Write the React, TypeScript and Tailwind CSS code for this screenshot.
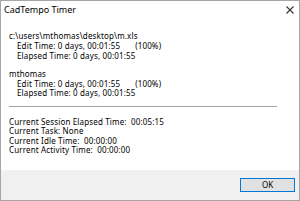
import React from "react";

export default function App() {
  const font = { fontFamily: '"Segoe UI", "Noto Sans", "Liberation Sans", Arial, sans-serif' };
  return (
    <div
      className="w-[300px] h-[201px] border border-[#a6a6a6] bg-white flex flex-col text-[#000] overflow-hidden"
      style={font}
    >
      <div className="h-[17px] flex items-center justify-between pl-[3px] pr-[4px] shrink-0">
        <span className="text-[9px] leading-[10px]">CadTempo Timer</span>
        <svg width="8" height="8" viewBox="0 0 8 8" className="mr-[1px]">
          <path d="M0.5 0.5 L7.5 7.5 M7.5 0.5 L0.5 7.5" stroke="#333" strokeWidth="1.1" />
        </svg>
      </div>
      <div className="flex-1 pl-[8px] pr-[22px] pt-[13px] text-[8px] tracking-[0.15px] whitespace-pre">
        <div className="leading-[10px]">
          <div>c:\users\mthomas\desktop\m.xls</div>
          <div className="pl-[8px]">
            Edit Time: 0 days, 00:01:55<span className="ml-[15px]">(100%)</span>
          </div>
          <div className="pl-[8px]">Elapsed Time: 0 days, 00:01:55</div>
        </div>
        <div className="leading-[9.5px] mt-[8px]">
          <div>mthomas</div>
          <div className="pl-[8px]">
            Edit Time: 0 days, 00:01:55<span className="ml-[15px]">(100%)</span>
          </div>
          <div className="pl-[8px]">Elapsed Time: 0 days, 00:01:55</div>
        </div>
        <div className="mt-[8px] h-[2px] border-t border-[#a0a0a0] border-b border-b-white" />
        <div className="leading-[9.5px] mt-[9px]">
          <div>Current Session Elapsed Time:  00:05:15</div>
          <div>Current Task: None</div>
          <div>Current Idle Time:  00:00:00</div>
          <div>Current Activity Time:  00:00:00</div>
        </div>
      </div>
      <div className="h-[30px] shrink-0 bg-[#f0f0f0] flex items-start justify-end pt-[8px] pr-[4px]">
        <button className="w-[55px] h-[14px] bg-[#e1e1e1] border-[1.5px] border-[#0078d7] text-[8px] leading-[10px] flex items-center justify-center">
          OK
        </button>
      </div>
    </div>
  );
}
